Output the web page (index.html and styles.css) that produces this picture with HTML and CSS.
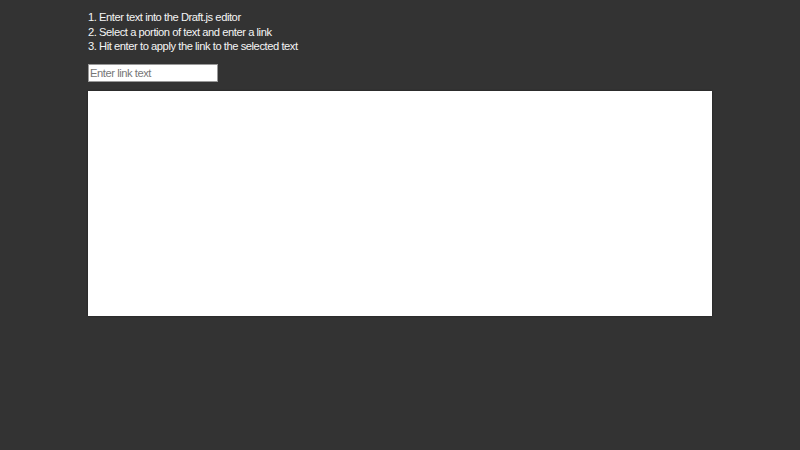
FILE: index.html
```html
<!DOCTYPE html>
<html>
<head>
<meta charset="utf-8">
<link rel="stylesheet" href="styles.css">
</head>
<body>
<div class="wrap">
  <div class="steps">
    <div>1. Enter text into the Draft.js editor</div>
    <div>2. Select a portion of text and enter a link</div>
    <div>3. Hit enter to apply the link to the selected text</div>
  </div>
  <input class="link-input" type="text" placeholder="Enter link text">
  <div class="editor"></div>
</div>
</body>
</html>
```
FILE: styles.css
```css
html, body {
  margin: 0;
  padding: 0;
  background: #333333;
  height: 100%;
}
body {
  font-family: "Liberation Sans", Arial, sans-serif;
  color: #f5f5f5;
}
.wrap {
  width: 624px;
  margin: 0 auto;
  padding-top: 10px;
  display: flex;
  flex-direction: column;
  align-items: flex-start;
}
.steps {
  font-size: 11.2px;
  letter-spacing: -0.45px;
  line-height: 14.5px;
}
.link-input {
  margin-top: 10px;
  width: 130px;
  height: 18px;
  box-sizing: border-box;
  border: 1px solid #999;
  padding: 0 1px;
  font-family: "Liberation Sans", Arial, sans-serif;
  font-size: 11.2px;
  letter-spacing: -0.45px;
  color: #222;
  background: #fff;
  outline: none;
}
.link-input::placeholder {
  color: #777;
}
.editor {
  margin-top: 9px;
  width: 624px;
  height: 225px;
  background: #fff;
  box-shadow: 0 0 2px rgba(0,0,0,0.4);
}
```
